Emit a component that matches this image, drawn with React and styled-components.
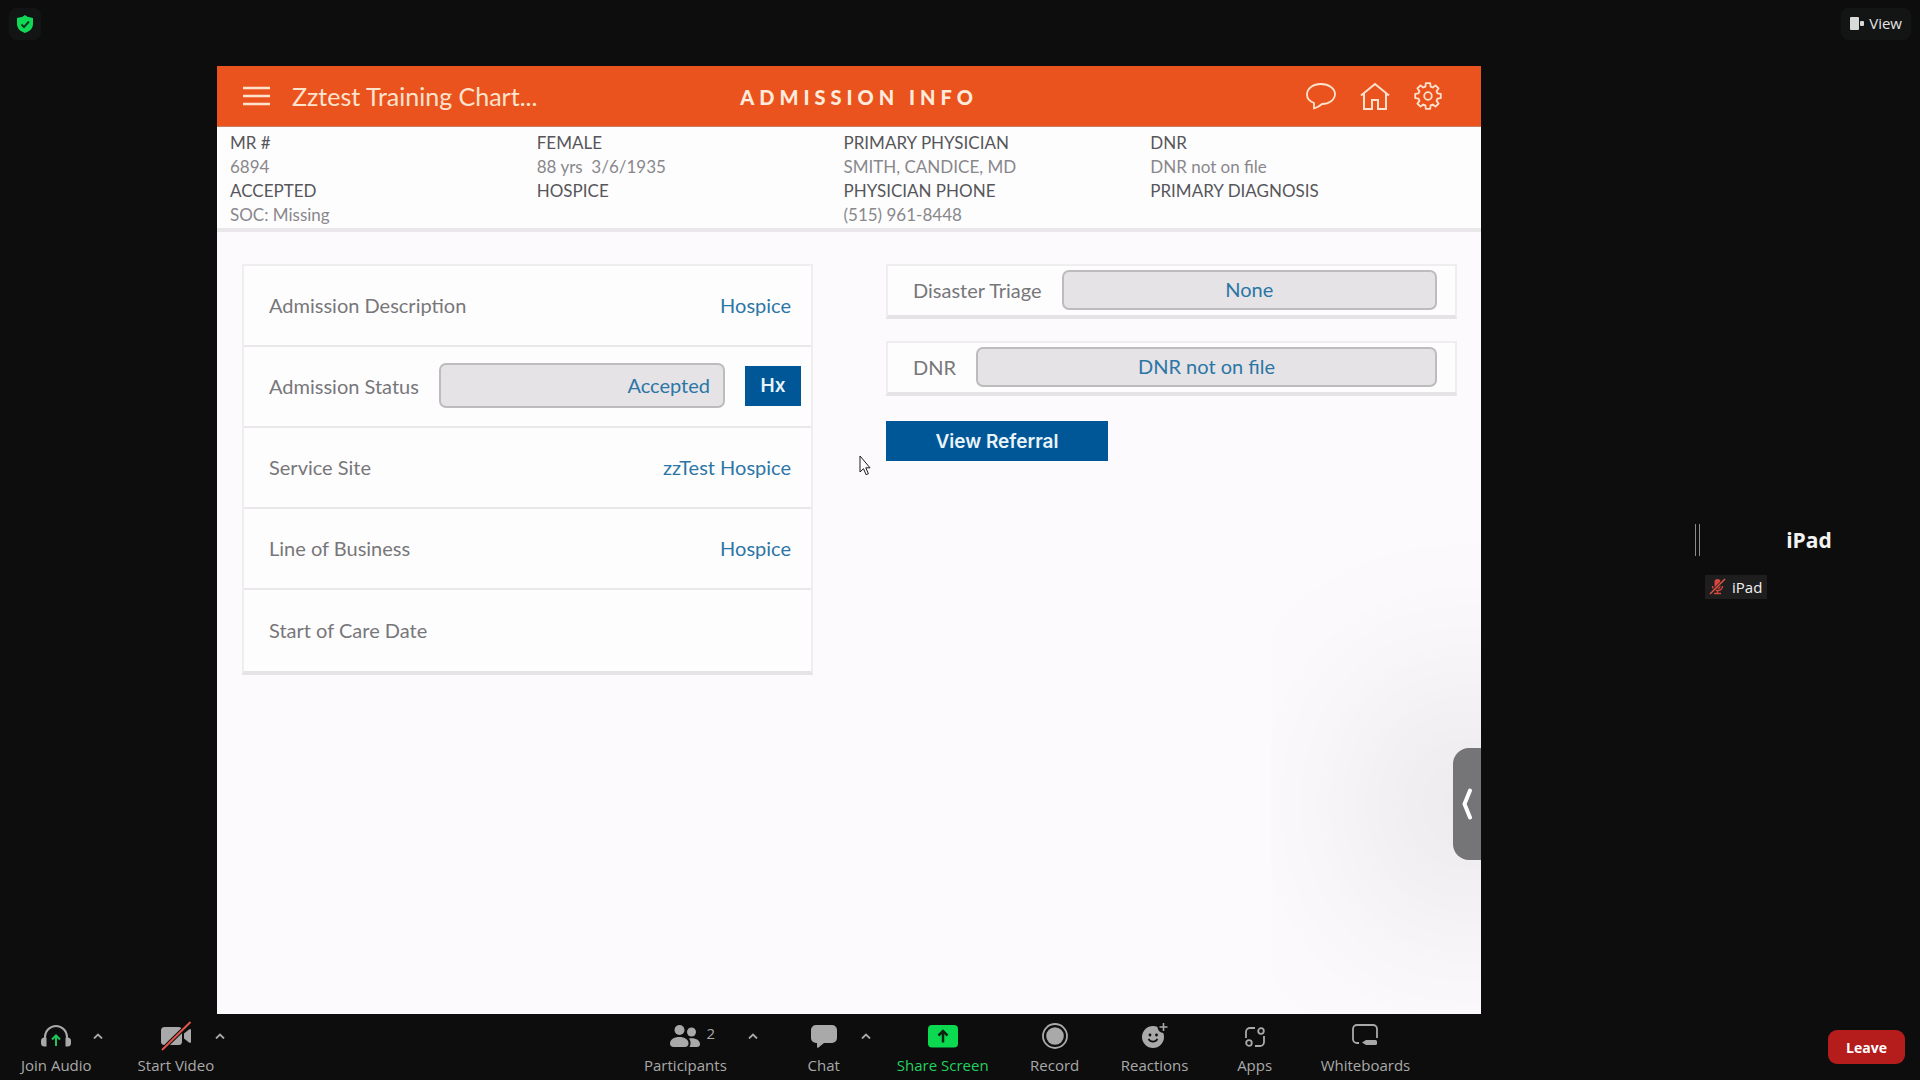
import React from "react";
import styled, { createGlobalStyle } from "styled-components";

const GlobalStyle = createGlobalStyle`
  * {
    box-sizing: border-box;
  }

  body {
    margin: 0;
    background: #0d0d0d;
  }

  button, input {
    font-family: inherit;
    margin: 0;
  }
`;

const meetingFont = `"Open Sans", "Noto Sans", sans-serif`;
const chartFont = `Lato, "Open Sans", sans-serif`;

const Meeting = styled.div`
  display: grid;
  grid-template-rows: auto minmax(0, 1fr) auto;
  height: 100vh;
  background: #0d0d0d;
  color: #a9a9a9;
  font-family: ${meetingFont};
`;

const TopBar = styled.header`
  display: flex;
  justify-content: space-between;
  align-items: flex-start;
  height: 66px;
  padding: 8px 9px;
`;

const TopButton = styled.button`
  display: flex;
  align-items: center;
  gap: 5px;
  height: 32px;
  padding: 0 ${props => props.$wide ? "9px 2px" : "8px 0"};
  border: 0;
  border-radius: 8px;
  background: #131414;
  color: #e4e4e4;
  font-size: 15px;
`;

const Middle = styled.div`
  display: flex;
  min-height: 0;
`;

const Stage = styled.main`
  display: flex;
  flex: 1;
  justify-content: center;
  min-width: 0;
`;

const Gallery = styled.aside`
  display: flex;
  align-items: center;
  width: 222px;
`;

const Grip = styled.div`
  width: 5px;
  height: 32px;
  margin-left: -3px;
  border: solid #8a8a8a;
  border-width: 0 1px;
`;

const Tile = styled.div`
  display: flex;
  flex: 1;
  align-items: center;
  justify-content: center;
  position: relative;
  height: 117px;
  margin: 0 7px 0 5px;
  color: #f2f2f2;
  font-size: 21px;
  font-weight: 700;
`;

const NameTag = styled.span`
  display: flex;
  align-items: center;
  gap: 6px;
  position: absolute;
  left: 0;
  bottom: 0;
  height: 24px;
  padding: 0 5px 0 4px;
  background: #1e1e1e;
  font-size: 15px;
  font-weight: 400;
`;

// Shared iPad screen

const Share = styled.section`
  position: relative;
  overflow: hidden;
  height: 100%;
  aspect-ratio: 4 / 3;
  background: #fcfafd;
  font-family: ${chartFont};
`;

const ChartHeader = styled.div`
  display: grid;
  grid-template-columns: 15fr auto 14fr;
  align-items: center;
  height: 61px;
  padding: 0 39px 0 26px;
  border-bottom: 1px solid #c98067;
  background: #ea531d;
  color: #fde3cd;
`;

const ChartName = styled.div`
  display: flex;
  align-items: center;
  gap: 22px;
  font-size: 25px;
  white-space: nowrap;
`;

const ChartTitle = styled.h1`
  margin: 0;
  padding-top: 2px;
  font-size: 20px;
  font-weight: 900;
  letter-spacing: 5px;
  color: #feebdc;
`;

const ChartIcons = styled.div`
  display: flex;
  justify-content: flex-end;
  align-items: center;
  gap: 24px;
`;

const IconButton = styled.button`
  display: flex;
  padding: 0;
  border: 0;
  background: none;
  color: inherit;
`;

const PatientBand = styled.div`
  display: grid;
  grid-template-columns: repeat(4, 1fr);
  height: 105px;
  padding: 4px 24px 0 13px;
  border-bottom: 4px solid #e9e7ea;
  background: #fefdfe;
  font-size: 17px;
  line-height: 24px;
`;

const PatientLine = styled.div`
  color: ${props => props.$heading ? "#56565a" : "#88888c"};
  white-space: pre;
`;

const Panels = styled.div`
  display: grid;
  grid-template-columns: 1fr 1fr;
  align-items: start;
  gap: 73px;
  padding: 32px 24px 0 25px;
`;

const Card = styled.div`
  border: 2px solid #efedf0;
  border-bottom: 4px solid #e5e3e6;
  background: #fefdfe;
  color: #77777a;
  font-size: 20px;
`;

const Row = styled.div`
  display: flex;
  align-items: center;
  justify-content: space-between;
  gap: 20px;
  height: 81px;
  padding: 0 ${props => props.$action ? "10px" : "20px"} 2px 25px;
  border-bottom: 2px solid #e9e7ea;

  &:last-child {
    border-bottom: 0;
  }
`;

const Value = styled.span`
  color: #2b76a5;
`;

const Side = styled.div`
  display: flex;
  flex-direction: column;
  align-items: stretch;
  gap: 22px;
`;

const FieldCard = styled(Card)`
  display: flex;
  align-items: center;
  gap: 20px;
  padding: 4px 18px 5px 25px;
`;

const Field = styled.input`
  flex: 1;
  min-width: 0;
  height: ${props => props.$tall ? "45px" : "40px"};
  padding: 0 13px 2px;
  border: 2px solid #bdbbbe;
  border-radius: 7px;
  background: #e5e3e6;
  color: #2b76a5;
  font-size: 20px;
  text-align: ${props => props.$tall ? "right" : "center"};
`;

const BlueButton = styled.button`
  height: 40px;
  width: ${props => props.$wide ? "222px" : "56px"};
  margin-top: ${props => props.$wide ? "3px" : "0"};
  padding: 0;
  border: 0;
  background: #005797;
  color: #e9f3fa;
  font-family: Inter, sans-serif;
  font-size: 19px;
  font-weight: 600;
`;

const Drawer = styled.button`
  display: flex;
  align-items: center;
  position: absolute;
  right: 0;
  bottom: 154px;
  width: 28px;
  height: 112px;
  padding: 0 0 0 8px;
  border: 0;
  border-radius: 16px 0 0 16px;
  background: #757476;
  box-shadow: 0 0 200px 20px rgba(0, 0, 0, 0.38);
`;

const Pointer = styled.svg`
  position: absolute;
  left: 642px;
  top: 389px;
`;

// Bottom toolbar

const ToolBar = styled.footer`
  display: flex;
  align-items: center;
  justify-content: space-between;
  height: 66px;
  padding: 0 15px 0 21px;
`;

const ToolGroup = styled.div`
  display: flex;
  gap: ${props => props.$gap || "0"};
`;

const SplitTool = styled.div`
  display: flex;
  justify-content: flex-end;
  min-width: ${props => props.$compact ? "0" : "113px"};
  padding-right: ${props => props.$compact ? "0" : "5px"};
`;

const ToolButton = styled.button`
  display: flex;
  flex-direction: column;
  align-items: center;
  gap: 3px;
  min-width: ${props => props.$split ? "0" : "100px"};
  padding: 0 ${props => props.$compact ? "0" : "16px"};
  border: 0;
  background: none;
  color: ${props => props.$green ? "#23d15f" : "#a9a9a9"};
  font-size: 15px;
  line-height: 20px;
  white-space: nowrap;
`;

const IconSlot = styled.span`
  display: flex;
  align-items: center;
  justify-content: center;
  position: relative;
  height: 32px;
`;

const Count = styled.span`
  position: absolute;
  left: 36px;
  top: 3px;
  font-size: 15px;
`;

const Caret = styled.button`
  display: flex;
  align-items: center;
  justify-content: center;
  width: ${props => props.$compact ? "12px" : "20px"};
  height: 32px;
  padding: 0;
  border: 0;
  background: none;
  color: #a9a9a9;
`;

const LeaveButton = styled.button`
  width: 77px;
  height: 34px;
  padding: 0;
  border: 0;
  border-radius: 9px;
  background: #b51c1c;
  color: #fff;
  font-size: 14px;
  font-weight: 700;
`;

const patient = [
  ["MR #", "6894", "ACCEPTED", "SOC: Missing"],
  ["FEMALE", "88 yrs  3/6/1935", "HOSPICE"],
  ["PRIMARY PHYSICIAN", "SMITH, CANDICE, MD", "PHYSICIAN PHONE", "(515) 961-8448"],
  ["DNR", "DNR not on file", "PRIMARY DIAGNOSIS"]
];

const icons = {
  audio: (
    <svg width="30" height="24" viewBox="0 0 30 24" fill="none">
      <path d="M4 16v-3a11 11 0 0 1 22 0v3" stroke="#a9a9a9" strokeWidth="2" />
      <path d="M5.500 13.500v9H3.500a3.500 3.500 0 0 1-3.500-3.500v-2a3.500 3.500 0 0 1 3.500-3.500zM24.500 13.500v9h2a3.500 3.500 0 0 0 3.500-3.500v-2a3.500 3.500 0 0 0-3.500-3.500z" fill="#a9a9a9" />
      <path d="M15 22V12M11 15.500l4-4 4 4" stroke="#22c55b" strokeWidth="2" />
    </svg>
  ),
  video: (
    <svg width="32" height="30" viewBox="0 0 32 30">
      <rect x="1" y="6" width="21" height="18" rx="3.500" fill="#a9a9a9" />
      <path d="M24 12.500l5-4q2-1.200 2 1v11q0 2.200-2 1l-5-4z" fill="#a9a9a9" />
      <path d="M2 29L30.500 1" stroke="#0d0d0d" strokeWidth="4" />
      <path d="M2 29L30.500 1" stroke="#e0564b" strokeWidth="2" />
    </svg>
  ),
  people: (
    <svg width="30" height="24" viewBox="0 0 30 24" fill="#a9a9a9">
      <circle cx="9.500" cy="6" r="5" />
      <circle cx="21.500" cy="8" r="4.500" />
      <path d="M0 19.500C0 15.500 4 13 9.300 13s9.200 2.500 9.200 6.500c0 2.200-1.500 3.500-3.500 3.500H3.500C1.500 23 0 21.700 0 19.500z" />
      <path d="M19 14.500c6-1 11 1.500 11 5.500 0 2-1.200 3-3 3h-7.500c1.500-2.500 1.500-6-.500-8.500z" />
    </svg>
  ),
  chat: (
    <svg width="26" height="24" viewBox="0 0 26 24" fill="#a9a9a9">
      <path d="M5 1h16a5 5 0 0 1 5 5v8a5 5 0 0 1-5 5h-8l-5.500 4.500q-1.500 1-1.500-1V19H5a5 5 0 0 1-5-5V6a5 5 0 0 1 5-5z" />
    </svg>
  ),
  share: (
    <svg width="30" height="24" viewBox="0 0 30 24" fill="none">
      <rect y="1" width="30" height="22.500" rx="4" fill="#0bd94f" />
      <path d="M15 18.500V7.500M10.500 11.500L15 7l4.500 4.500" stroke="#0d2414" strokeWidth="2.500" />
    </svg>
  ),
  record: (
    <svg width="26" height="26" viewBox="0 0 26 26">
      <circle cx="13" cy="13" r="12" fill="none" stroke="#a9a9a9" strokeWidth="1.800" />
      <circle cx="13" cy="13" r="8.800" fill="#a9a9a9" />
    </svg>
  ),
  reactions: (
    <svg width="26" height="28" viewBox="0 0 26 28" fill="none">
      <circle cx="11" cy="15" r="11" fill="#a9a9a9" />
      <circle cx="21.500" cy="5" r="6" fill="#0d0d0d" />
      <path d="M21.500 1v8M17.500 5h8" stroke="#a9a9a9" strokeWidth="1.600" />
      <circle cx="8" cy="13" r="1.400" fill="#0d0d0d" />
      <circle cx="14.500" cy="13" r="1.400" fill="#0d0d0d" />
      <path d="M6.500 17c2 3.500 7 3.500 9 0" stroke="#0d0d0d" strokeWidth="1.600" />
    </svg>
  ),
  apps: (
    <svg width="20" height="22" viewBox="0 0 20 22" fill="none" stroke="#a9a9a9" strokeWidth="1.800">
      <path d="M1 13V7a4 4 0 0 1 4-4h5M19 11v6a4 4 0 0 1-4 4h-5" />
      <circle cx="16" cy="6" r="2.800" />
      <circle cx="4" cy="18" r="2.800" />
    </svg>
  ),
  whiteboard: (
    <svg width="26" height="24" viewBox="0 0 26 24" fill="none">
      <path d="M7 19H5a4 4 0 0 1-4-4V5a4 4 0 0 1 4-4h16a4 4 0 0 1 4 4v9" stroke="#a9a9a9" strokeWidth="1.800" />
      <path d="M10 18.500l4-2.500h9.500q1.500 0 1.500 1.500v2q0 1.500-1.500 1.500H14z" fill="#a9a9a9" />
    </svg>
  )
};

const tools = [
  { name: "Participants", icon: icons.people, split: true, count: 2 },
  { name: "Chat", icon: icons.chat, split: true },
  { name: "Share Screen", icon: icons.share, green: true },
  { name: "Record", icon: icons.record },
  { name: "Reactions", icon: icons.reactions },
  { name: "Apps", icon: icons.apps },
  { name: "Whiteboards", icon: icons.whiteboard }
];

const Tool = ({ name, icon, split, compact, count, green }) => {
  const main = (
    <ToolButton $split={split} $compact={compact} $green={green}>
      <IconSlot>
        {icon}
        {count && <Count>{count}</Count>}
      </IconSlot>
      {name}
    </ToolButton>
  );
  if (!split) {
    return main;
  }
  return (
    <SplitTool $compact={compact}>
      {main}
      <Caret $compact={compact} aria-label={`${name} options`}>
        <svg width="10" height="6" viewBox="0 0 10 6" fill="none" stroke="currentColor" strokeWidth="1.800">
          <path d="M1 5.500l4-4 4 4" />
        </svg>
      </Caret>
    </SplitTool>
  );
};

// Cog outline with eight teeth
const cogPath = () => {
  const points = [];
  for (let i = 0; i < 8; i++) {
    [[-0.27, 9.8], [-0.17, 13], [0.17, 13], [0.27, 9.8]].forEach(([turn, r]) => {
      const angle = i * Math.PI / 4 + turn;
      points.push(`${(14 + r * Math.sin(angle)).toFixed(2)} ${(14 - r * Math.cos(angle)).toFixed(2)}`);
    });
  }
  return `M${points.join("L")}Z`;
};

const App = () => (
  <Meeting>
    <GlobalStyle />
    <TopBar>
      <TopButton aria-label="Meeting information">
        <svg width="16" height="18" viewBox="0 0 16 18" fill="none">
          <path d="M8 0l2.500 1.800L16 3v6c0 4.500-3.500 7.500-8 9-4.500-1.500-8-4.500-8-9V3l5.500-1.200z" fill="#0fd955" />
          <path d="M4.500 9.500l2.500 2.500 5-5.500" stroke="#0d3a1d" strokeWidth="2" />
        </svg>
      </TopButton>
      <TopButton $wide>
        <svg width="14" height="13" viewBox="0 0 14 13" fill="#d9d9d9">
          <rect width="9" height="13" rx="1" />
          <rect x="10" y="4" width="4" height="5" rx="1" />
        </svg>
        View
      </TopButton>
    </TopBar>

    <Middle>
      <Stage>
        <Share>
          <ChartHeader>
            <ChartName>
              <IconButton aria-label="Menu">
                <svg width="27" height="20" viewBox="0 0 27 20" stroke="currentColor" strokeWidth="2.600">
                  <path d="M0 2h27M0 10h27M0 18h27" />
                </svg>
              </IconButton>
              Zztest Training Chart...
            </ChartName>
            <ChartTitle>ADMISSION INFO</ChartTitle>
            <ChartIcons>
              <IconButton aria-label="Messages">
                <svg width="30" height="28" viewBox="0 0 30 28" fill="none" stroke="currentColor" strokeWidth="1.800" strokeLinejoin="round">
                  <path d="M8 26.500V21C4 19.500 1 16.500 1 12.500 1 6.500 7 2 15 2s14 4.500 14 10c0 6-6 10-13 10-2 2-5 3.500-8 4.500z" />
                </svg>
              </IconButton>
              <IconButton aria-label="Home">
                <svg width="30" height="28" viewBox="0 0 30 28" fill="none" stroke="currentColor" strokeWidth="2">
                  <path d="M1 13.500L15 2l14 11.500M4 11.500V27h8v-9h6v9h8V11.500" />
                </svg>
              </IconButton>
              <IconButton aria-label="Settings">
                <svg width="28" height="28" viewBox="0 0 28 28" fill="none" stroke="currentColor" strokeWidth="1.800" strokeLinejoin="round">
                  <path d={cogPath()} />
                  <circle cx="14" cy="14" r="3.800" />
                </svg>
              </IconButton>
            </ChartIcons>
          </ChartHeader>

          <PatientBand>
            {patient.map((lines, index) => (
              <div key={index}>
                {lines.map((line, i) => (
                  <PatientLine key={i} $heading={i % 2 === 0}>{line}</PatientLine>
                ))}
              </div>
            ))}
          </PatientBand>

          <Panels>
            <Card>
              <Row>Admission Description <Value>Hospice</Value></Row>
              <Row $action>
                <label htmlFor="status">Admission Status</label>
                <Field id="status" $tall readOnly value="Accepted" />
                <BlueButton>Hx</BlueButton>
              </Row>
              <Row>Service Site <Value>zzTest Hospice</Value></Row>
              <Row>Line of Business <Value>Hospice</Value></Row>
              <Row>Start of Care Date</Row>
            </Card>
            <Side>
              <FieldCard>
                <label htmlFor="triage">Disaster Triage</label>
                <Field id="triage" readOnly value="None" />
              </FieldCard>
              <FieldCard>
                <label htmlFor="dnr">DNR</label>
                <Field id="dnr" readOnly value="DNR not on file" />
              </FieldCard>
              <BlueButton $wide>View Referral</BlueButton>
            </Side>
          </Panels>

          <Drawer aria-label="Open drawer">
            <svg width="12" height="32" viewBox="0 0 12 32" fill="none" stroke="#fff" strokeWidth="4" strokeLinecap="round" strokeLinejoin="round">
              <path d="M9 2.500L3.500 16 9 29.500" />
            </svg>
          </Drawer>
          <Pointer width="12" height="21" viewBox="0 0 12 21">
            <path d="M1 1v16l3.500-3.300 2.600 6 2.300-1-2.600-5.900H11z" fill="#fff" stroke="#1a1a1a" />
          </Pointer>
        </Share>
      </Stage>
      <Gallery>
        <Grip />
        <Tile>
          iPad
          <NameTag>
            <svg width="17" height="17" viewBox="0 0 17 17" fill="none">
              <rect x="5.500" y="1" width="6" height="10" rx="3" fill="#d9463f" />
              <path d="M3.500 8c0 6 10 6 10 0M8.500 12.500V15M5 15.500h7" stroke="#d9463f" strokeWidth="1.500" />
              <path d="M1 16L16 1" stroke="#1e1e1e" strokeWidth="3" />
              <path d="M1 16L16 1" stroke="#e0564b" strokeWidth="1.500" />
            </svg>
            iPad
          </NameTag>
        </Tile>
      </Gallery>
    </Middle>

    <ToolBar>
      <ToolGroup $gap="34px">
        <Tool name="Join Audio" icon={icons.audio} split compact />
        <Tool name="Start Video" icon={icons.video} split compact />
      </ToolGroup>
      <ToolGroup>
        {tools.map(tool => <Tool key={tool.name} {...tool} />)}
      </ToolGroup>
      <LeaveButton>Leave</LeaveButton>
    </ToolBar>
  </Meeting>
);

export default App;
